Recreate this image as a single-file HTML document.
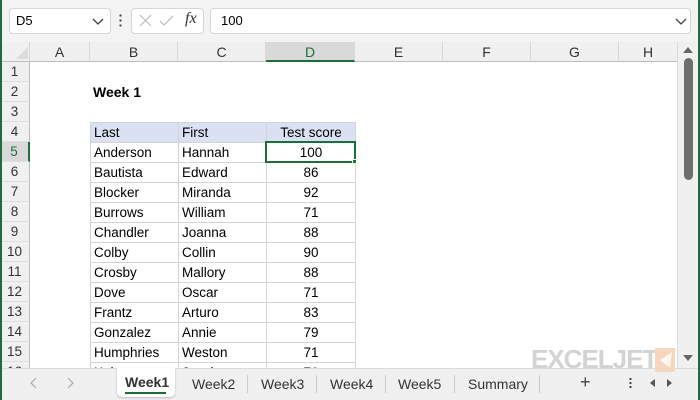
<!DOCTYPE html>
<html><head><style>
*{margin:0;padding:0;box-sizing:border-box}
body{width:700px;height:400px;overflow:hidden;background:#fff;font-family:"Liberation Sans",Calibri,sans-serif;font-size:13.5px;color:#000;position:relative}
.a{position:absolute}
.top{left:0;top:0;width:700px;height:42px;background:#f3f3f3}
.box{background:#fff;border:1px solid #d6d6d6;border-radius:4px}
.ch{top:42px;height:20px;background:#f0f0f0;border-bottom:1px solid #bdbdbd;color:#333;font-size:14px;text-align:center;line-height:20px;border-right:1px solid #d8d8d8}
.rh{left:0;width:30px;height:20px;background:#f0f0f0;border-right:1px solid #bdbdbd;color:#333;text-align:center;line-height:20px;font-size:13.5px;border-bottom:1px solid #dedede}
.c{height:20px;line-height:19px;padding-left:3px;border-right:1px solid #d4d4d4;border-bottom:1px solid #d4d4d4;white-space:nowrap;overflow:hidden}
.n{text-align:center;padding-left:0}
.tabs{left:0;top:368px;width:700px;height:32px;background:#f0f0f0;border-top:1px solid #dadada}
.t{top:376px;font-size:14px;color:#333}
</style></head><body>
<div class="a top"></div>
<div class="a" style="left:0;top:0;width:2px;height:400px;background:#1e6e3c;z-index:5"></div>
<div class="a" style="left:698px;top:0;width:2px;height:400px;background:#1e6e3c;z-index:5"></div>
<div class="a box" style="left:9px;top:8px;width:102px;height:26px"></div>
<div class="a" style="left:16px;top:13px;font-size:13px">D5</div>
<svg class="a" style="left:92px;top:16px" width="12" height="10"><path d="M1 3l5 5 5-5" stroke="#444" fill="none" stroke-width="1.3"/></svg>
<div class="a" style="left:119px;top:13px;width:3px;height:14px;background:radial-gradient(circle,#444 1px,transparent 1.3px) 0 0/3px 5px"></div>
<div class="a box" style="left:131px;top:8px;width:73px;height:26px"></div>
<svg class="a" style="left:138px;top:13px" width="40" height="16"><path d="M2 2l11 11M13 2L2 13" stroke="#bbb" stroke-width="1.2"/><path d="M22 8l4 4 9-9" stroke="#bbb" fill="none" stroke-width="1.2"/></svg>
<div class="a" style="left:185px;top:10px;font-family:'Liberation Serif',serif;font-style:italic;font-size:16px;color:#333">fx</div>
<div class="a box" style="left:210px;top:8px;width:481px;height:26px"></div>
<div class="a" style="left:221px;top:13px;font-size:13px">100</div>
<svg class="a" style="left:675px;top:16px" width="12" height="10"><path d="M1 3l5 5 5-5" stroke="#444" fill="none" stroke-width="1.3"/></svg>

<div class="a ch" style="left:0;width:30px"></div>
<svg class="a" style="left:16px;top:47px" width="12" height="12"><path d="M12 0V12H0Z" fill="#dcdcdc"/></svg>
<div class="a ch" style="left:30px;width:60px">A</div>
<div class="a ch" style="left:90px;width:88px">B</div>
<div class="a ch" style="left:178px;width:88px">C</div>
<div class="a ch" style="left:266px;width:89px;background:#d9d9d9;border-bottom:2px solid #1e6e3c;color:#1e6e3c">D</div>
<div class="a ch" style="left:355px;width:88px">E</div>
<div class="a ch" style="left:443px;width:88px">F</div>
<div class="a ch" style="left:531px;width:88px">G</div>
<div class="a ch" style="left:619px;width:58px;border-right:none">H</div>

<div class="a" style="left:677px;top:42px;width:21px;height:326px;background:#f0f0f0;border-left:1px solid #dcdcdc"></div>
<svg class="a" style="left:682px;top:46px" width="12" height="8"><path d="M1 7L6 1 11 7Z" fill="#666"/></svg>
<div class="a" style="left:684px;top:58px;width:9px;height:122px;background:#6e6e6e;border-radius:5px"></div>
<svg class="a" style="left:682px;top:354px" width="12" height="8"><path d="M1 1L6 7 11 1Z" fill="#666"/></svg>

<div class="a rh" style="top:62px">1</div>
<div class="a rh" style="top:82px">2</div>
<div class="a rh" style="top:102px">3</div>
<div class="a rh" style="top:122px">4</div>
<div class="a rh" style="top:142px;background:#d9d9d9;border-right:2px solid #1e6e3c;color:#1e6e3c">5</div>
<div class="a rh" style="top:162px">6</div>
<div class="a rh" style="top:182px">7</div>
<div class="a rh" style="top:202px">8</div>
<div class="a rh" style="top:222px">9</div>
<div class="a rh" style="top:242px">10</div>
<div class="a rh" style="top:262px">11</div>
<div class="a rh" style="top:282px">12</div>
<div class="a rh" style="top:302px">13</div>
<div class="a rh" style="top:322px">14</div>
<div class="a rh" style="top:342px">15</div>
<div class="a rh" style="top:362px">16</div>

<div class="a" style="left:93px;top:84px;font-weight:bold;font-size:14px">Week 1</div>

<div class="a" style="left:90px;top:122px;border-left:1px solid #d4d4d4;border-top:1px solid #d4d4d4">
<div style="display:grid;grid-template-columns:88px 88px 89px">
<div class="c" style="background:#d9e1f2">Last</div><div class="c" style="background:#d9e1f2">First</div><div class="c n" style="background:#d9e1f2">Test score</div>
<div class="c">Anderson</div><div class="c">Hannah</div><div class="c n">100</div>
<div class="c">Bautista</div><div class="c">Edward</div><div class="c n">86</div>
<div class="c">Blocker</div><div class="c">Miranda</div><div class="c n">92</div>
<div class="c">Burrows</div><div class="c">William</div><div class="c n">71</div>
<div class="c">Chandler</div><div class="c">Joanna</div><div class="c n">88</div>
<div class="c">Colby</div><div class="c">Collin</div><div class="c n">90</div>
<div class="c">Crosby</div><div class="c">Mallory</div><div class="c n">88</div>
<div class="c">Dove</div><div class="c">Oscar</div><div class="c n">71</div>
<div class="c">Frantz</div><div class="c">Arturo</div><div class="c n">83</div>
<div class="c">Gonzalez</div><div class="c">Annie</div><div class="c n">79</div>
<div class="c">Humphries</div><div class="c">Weston</div><div class="c n">71</div>
<div class="c">Kahn</div><div class="c">Jacob</div><div class="c n">76</div>
</div></div>
<div class="a" style="left:265px;top:141px;width:91px;height:22px;border:2px solid #1e6e3c"></div>
<div class="a" style="left:352px;top:159px;width:5px;height:5px;background:#1e6e3c;border:1px solid #fff"></div>

<div class="a tabs"></div>
<div class="a" style="left:531px;top:344px;font-size:26px;font-weight:bold;color:#d3d3d3;letter-spacing:-1px;z-index:3">EXCELJET</div>
<div class="a" style="left:655px;top:348px;width:20px;height:24px;background:#f6d6bd;z-index:3"></div>
<svg class="a" style="left:658px;top:351px;z-index:4" width="16" height="18"><path d="M14 1L2 9l10 8Z" fill="#fff" opacity=".8"/></svg>
<svg class="a" style="left:28px;top:377px" width="50" height="12"><path d="M8 1L3 6l5 5M40 1l5 5-5 5" stroke="#aaa" fill="none" stroke-width="1.2"/></svg>
<div class="a" style="left:117px;top:368px;width:58px;height:29px;background:#fff;border-radius:0 0 5px 5px;box-shadow:0 1px 2px #bbb"></div>
<div class="a t" style="left:125px;top:374px;font-weight:bold;font-size:14px">Week1</div>
<div class="a" style="left:125px;top:392px;width:41px;height:2px;background:#1e6e3c"></div>
<div class="a t" style="left:192px">Week2</div>
<div class="a" style="left:247px;top:375px;width:1px;height:18px;background:#ccc"></div>
<div class="a t" style="left:261px">Week3</div>
<div class="a" style="left:316px;top:375px;width:1px;height:18px;background:#ccc"></div>
<div class="a t" style="left:330px">Week4</div>
<div class="a" style="left:385px;top:375px;width:1px;height:18px;background:#ccc"></div>
<div class="a t" style="left:398px">Week5</div>
<div class="a" style="left:454px;top:375px;width:1px;height:18px;background:#ccc"></div>
<div class="a t" style="left:468px">Summary</div>
<div class="a" style="left:539px;top:375px;width:1px;height:18px;background:#ccc"></div>
<div class="a" style="left:580px;top:372px;font-size:18px;color:#444">+</div>
<div class="a" style="left:629px;top:377px;width:3px;height:12px;background:radial-gradient(circle,#444 1px,transparent 1.3px) 0 0/3px 4px"></div>
<svg class="a" style="left:648px;top:378px" width="30" height="10"><path d="M7 1L2 5l5 4ZM19 1l5 4-5 4Z" fill="#555"/></svg>
</body></html>
